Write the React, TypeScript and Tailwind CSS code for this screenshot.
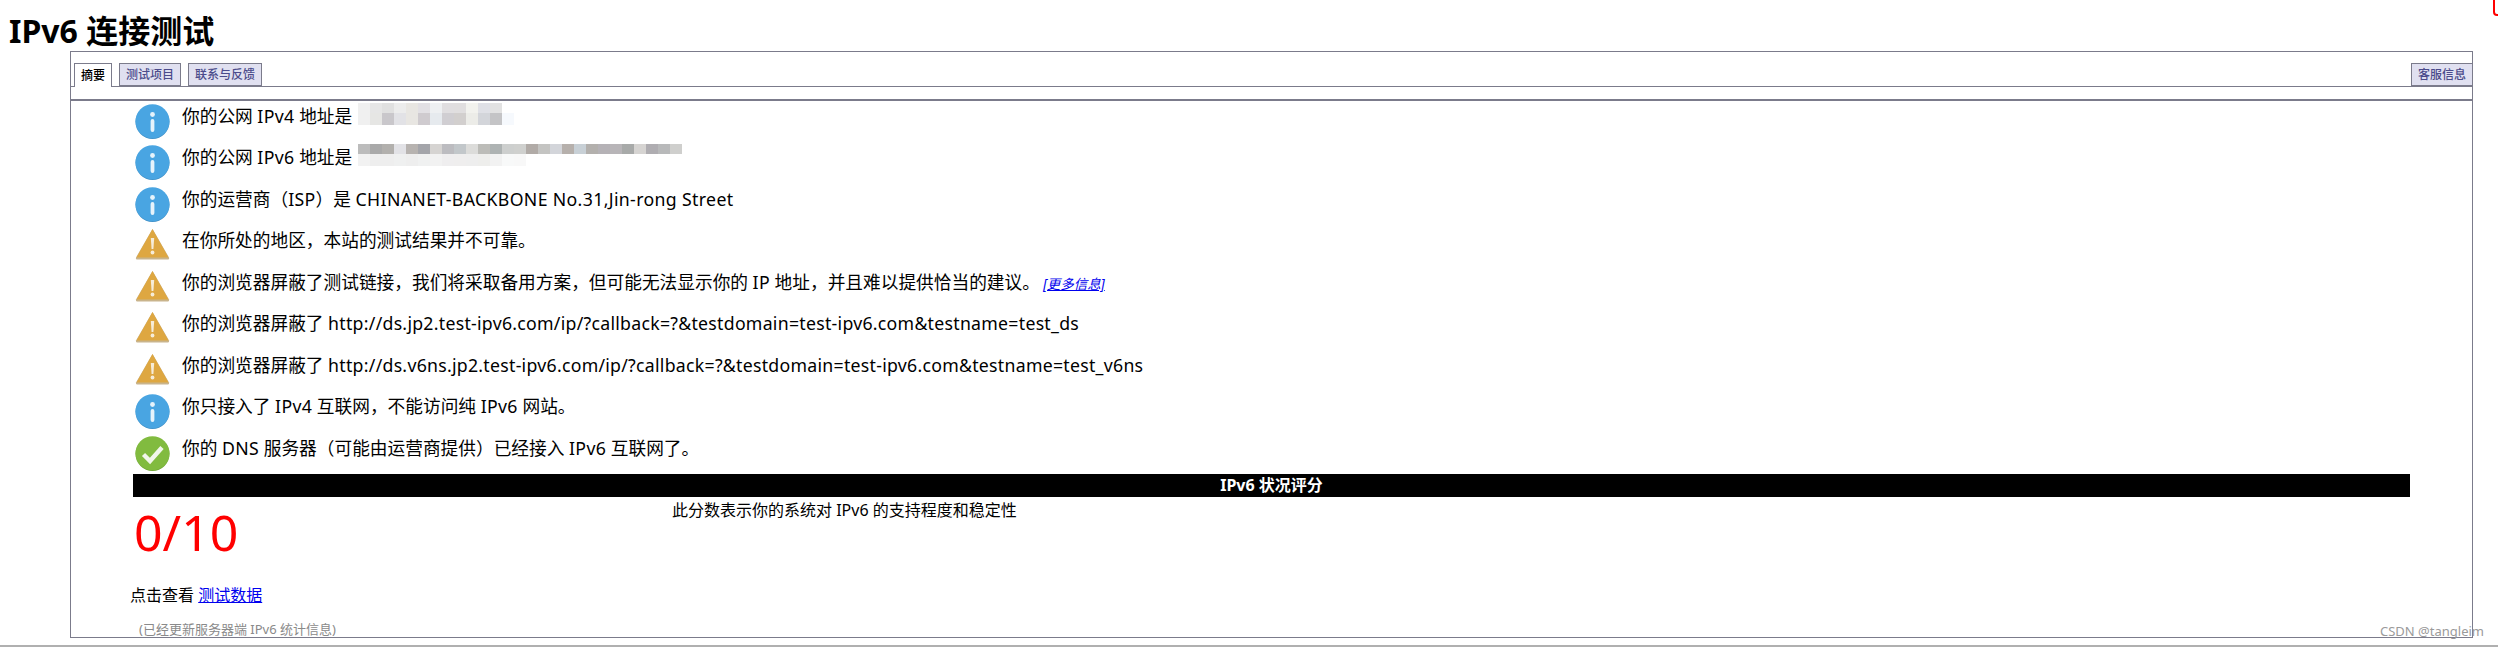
const font = "font-['Noto_Sans','Noto_Sans_CJK_SC',sans-serif]";

const InfoIcon = () => (
  <svg width="35" height="35" viewBox="0 0 35 35">
    <circle cx="17.5" cy="18" r="17" fill="#3f8fc6" />
    <circle cx="17.5" cy="17.2" r="17" fill="#49a5e2" />
    <circle cx="17.5" cy="10.5" r="2.4" fill="#e6f3fb" />
    <rect x="15.6" y="15" width="3.8" height="13" rx="1.9" fill="#e6f3fb" />
  </svg>
);

const WarnIcon = () => (
  <svg width="35" height="32" viewBox="0 0 35 32">
    <path d="M17.5 1 L34 29.5 Q34.5 31.5 33 31.5 L2 31.5 Q0.5 31.5 1 29.5 Z" fill="#c9b48c" />
    <path d="M17.5 1 L33.5 29.5 L1.5 29.5 Z" fill="#dea741" />
    <path d="M15.8 10 L19.2 10 L18.4 21 L16.6 21 Z" fill="#f6ecd8" />
    <circle cx="17.5" cy="24.5" r="1.9" fill="#f6ecd8" />
  </svg>
);

const CheckIcon = () => (
  <svg width="35" height="35" viewBox="0 0 35 35">
    <circle cx="17.5" cy="18" r="17" fill="#6ea532" />
    <circle cx="17.5" cy="17.2" r="17" fill="#81bb3f" />
    <path d="M8.5 18.5 L15 25 L27 11.5" fill="none" stroke="#f1f6ea" strokeWidth="4.4" />
  </svg>
);

const Mosaic = ({ top, bottom }: { top: string[]; bottom: string[] }) => (
  <span className="ml-[1px] inline-flex flex-col align-top">
    <span className="flex h-[10px]">
      {top.map((c, i) => (
        <span key={i} className="h-full w-[12px]" style={{ background: c }} />
      ))}
    </span>
    <span className="flex h-[12px]">
      {bottom.map((c, i) => (
        <span key={i} className="h-full w-[12px]" style={{ background: c }} />
      ))}
    </span>
  </span>
);

// latin runs need a little tracking to get the reference's width
const L = ({ children }: { children: React.ReactNode }) => <span className="tracking-[0.35px]">{children}</span>;
const Url = ({ children }: { children: React.ReactNode }) => <span className="tracking-[0.27px]">{children}</span>;

const ipv4Top = ["#f0f0f0", "#e6e6e6", "#e0e0e0", "#ececec", "#e8e6e2", "#e2e0e4", "#eef0f2", "#e0dee0", "#e0dedf", "#f2f2ee", "#dfe0e6", "#e2e2e2"];
const ipv4Bottom = ["#f0f0f0", "#e6e6e4", "#c9c7cb", "#e2e2e6", "#e8e6e2", "#cfcbcf", "#e6eaee", "#d0ced2", "#d2cfce", "#ececE8", "#d3d5da", "#c4c4c6", "#f6f9fd"];
const ipv6Top = ["#bcbcbc", "#a9a9a9", "#b2b0ad", "#e2e2e6", "#b7b3b0", "#a4a5aa", "#d6d4d2", "#bcbcc0", "#c2c7ca", "#dcdcda", "#bcbcb8", "#aeb3b3", "#cdcfce", "#cfd0ce", "#b1aba7", "#c4c4c2", "#d3d5da", "#b6b0ac", "#c8d0d6", "#b3b0ad", "#b5b2b6", "#b8b5b8", "#a8aaa9", "#d6d4d2", "#afadb1", "#b8b9ba", "#cfcfcd"];
const ipv6Bottom = ["#f2f2f2", "#eeeeee", "#eeeeee", "#eff0f0", "#eeeeee", "#f0f1f1", "#f2f2f2", "#efeeef", "#efeeee", "#eeeeee", "#eeeeec", "#f2f2f2", "#f8f9f9", "#f8f8f8", "#ffffff", "#ffffff", "#ffffff", "#ffffff", "#ffffff", "#ffffff", "#ffffff", "#ffffff", "#ffffff", "#ffffff", "#ffffff", "#ffffff", "#ffffff"];

const Row = ({ icon, children }: { icon: React.ReactNode; children: React.ReactNode }) => (
  <div className="flex h-[41.45px] items-start">
    <div className="flex h-[40px] w-[49px] shrink-0 justify-start pl-[2px] pt-[3px]">{icon}</div>
    <div className="whitespace-pre pt-[2px] text-[17.7px] leading-[26px] text-black">{children}</div>
  </div>
);

const tabCls =
  "mr-[7px] flex h-[23px] items-center border border-[#7b7b8b] bg-[#e0e0f0] px-[6px] text-[12px] font-medium text-[#4b4b8b]";

export default function App() {
  return (
    <div className={`relative h-[648px] w-[2498px] overflow-hidden bg-white ${font}`}>
      <h1 className="h-[51px] pl-[9px] pt-[11px] text-[32px] font-bold leading-[40px] text-black">IPv6 连接测试</h1>

      <div className="ml-[70px] h-[587px] w-[2403px] border border-[#7b7b8b]">
        <div className="flex h-[35px] items-end border-b border-[#7b7b8b] pl-[3px]">
          <div className="mr-[7px] -mb-px flex h-[24px] items-center border border-b-0 border-[#7b7b8b] bg-white px-[6px] text-[12px] font-medium text-black">
            摘要
          </div>
          <div className={tabCls}>测试项目</div>
          <div className={tabCls}>联系与反馈</div>
          <div className="ml-auto flex h-[23px] items-center border border-r-0 border-[#7b7b8b] bg-[#e0e0f0] px-[6px] text-[12px] font-medium text-[#4b4b8b]">
            客服信息
          </div>
        </div>
        <div className="mt-[12px] h-[2px] bg-[#7b7b8b]" />

        <div className="pl-[62px]">
          <Row icon={<InfoIcon />}>
            你的公网 <L>IPv4</L> 地址是 <Mosaic top={ipv4Top} bottom={ipv4Bottom} />
          </Row>
          <Row icon={<InfoIcon />}>
            你的公网 <L>IPv6</L> 地址是 <Mosaic top={ipv6Top} bottom={ipv6Bottom} />
          </Row>
          <Row icon={<InfoIcon />}>
            你的运营商（<L>ISP</L>）是 <L>CHINANET-BACKBONE No.31,Jin-rong Street</L>
          </Row>
          <Row icon={<WarnIcon />}>在你所处的地区，本站的测试结果并不可靠。</Row>
          <Row icon={<WarnIcon />}>
            你的浏览器屏蔽了测试链接，我们将采取备用方案，但可能无法显示你的 <L>IP</L> 地址，并且难以提供恰当的建议。
            <a href="#" className="ml-[3px] text-[13.5px] italic text-[#0000ee] underline">
              [更多信息]
            </a>
          </Row>
          <Row icon={<WarnIcon />}>
            你的浏览器屏蔽了 <Url>http://ds.jp2.test-ipv6.com/ip/?callback=?&amp;testdomain=test-ipv6.com&amp;testname=test_ds</Url>
          </Row>
          <Row icon={<WarnIcon />}>
            你的浏览器屏蔽了 <Url>http://ds.v6ns.jp2.test-ipv6.com/ip/?callback=?&amp;testdomain=test-ipv6.com&amp;testname=test_v6ns</Url>
          </Row>
          <Row icon={<InfoIcon />}>
            你只接入了 <L>IPv4</L> 互联网，不能访问纯 <L>IPv6</L> 网站。
          </Row>
          <Row icon={<CheckIcon />}>
            你的 <L>DNS</L> 服务器（可能由运营商提供）已经接入 <L>IPv6</L> 互联网了。
          </Row>
        </div>

        <div className="ml-[62px] flex h-[23px] w-[2277px] items-center justify-center bg-black text-[16px] font-bold text-white">
          IPv6 状况评分
        </div>

        <div className="flex h-[78px] pl-[63px]">
          <div className="w-[538px] text-[50px] leading-[70px] text-[#ff0000]">0/10</div>
          <div className="pt-[3px] text-[16px] leading-[20px] text-black">此分数表示你的系统对 IPv6 的支持程度和稳定性</div>
        </div>

        <div className="pl-[59px] pt-[10px] text-[16px] leading-[20px] text-black">
          点击查看{" "}
          <a href="#" className="text-[#0000ee] underline">
            测试数据
          </a>
        </div>
        <div className="pl-[68px] pt-[15px] text-[13px] leading-[18px] text-[#8a8a8a]">(已经更新服务器端 IPv6 统计信息)</div>
      </div>

      <div className="mt-[7px] h-[2px] bg-[#b0b0b0]" />

      <div className="absolute left-[2380px] top-[622px] whitespace-nowrap text-[13px] text-[#9a9a9a]">CSDN @tangleim</div>
      <div className="absolute left-[2493px] top-[-6px] h-[22px] w-[20px] rounded-[4px] border-2 border-[#ff0000]" />
    </div>
  );
}
